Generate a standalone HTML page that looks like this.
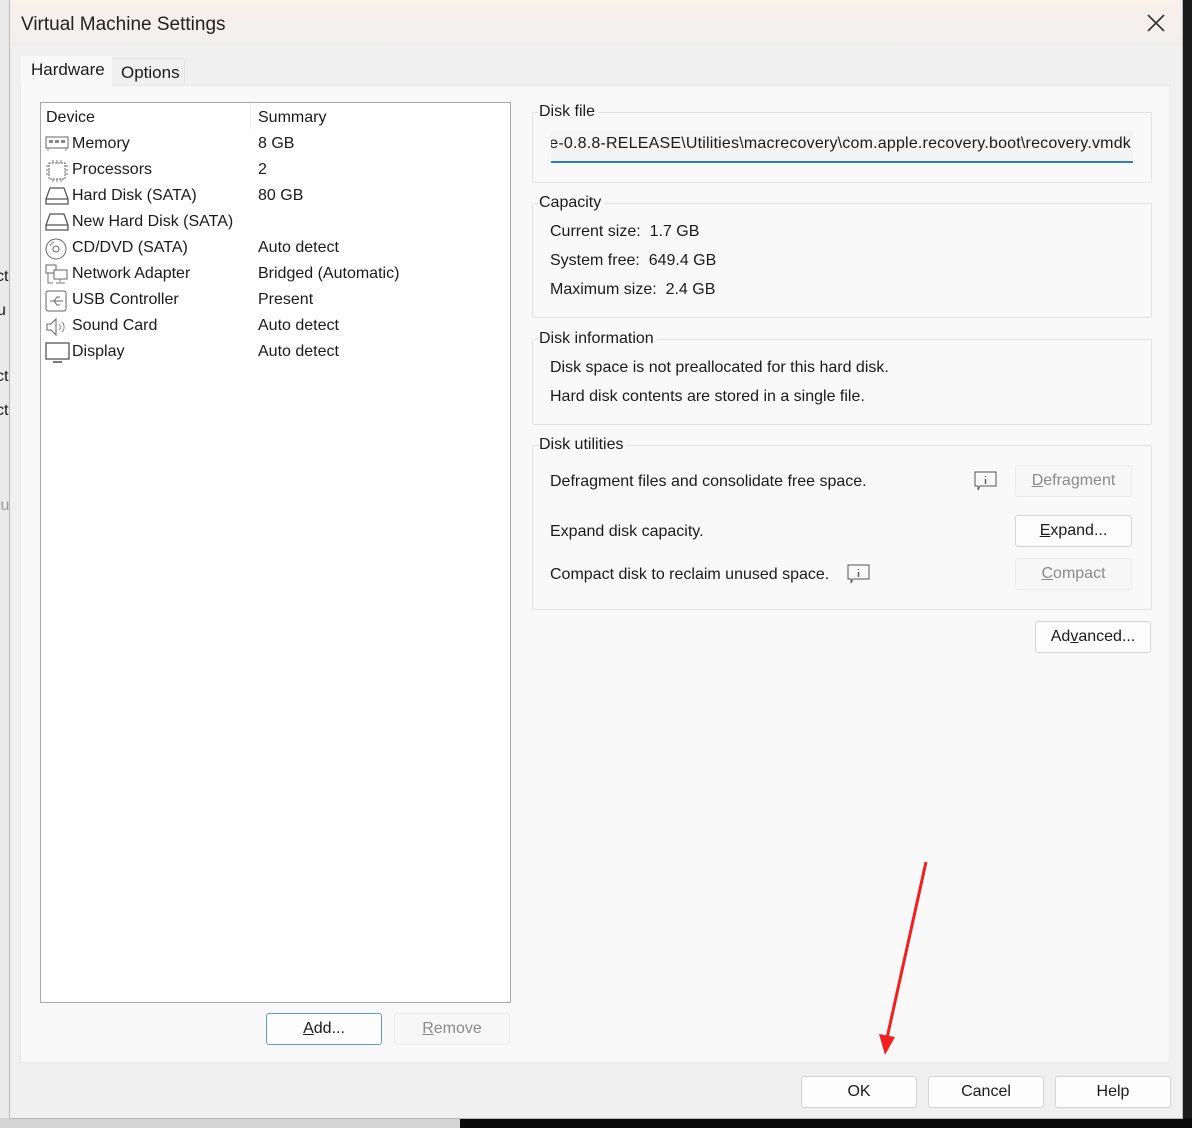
<!DOCTYPE html>
<html><head><meta charset="utf-8"><style>
*{margin:0;padding:0;box-sizing:border-box}
body{width:1192px;height:1128px;position:relative;overflow:hidden;background:#f0f0f0;font-family:"Liberation Sans",sans-serif;font-size:16px;color:#1a1a1a}
.a{position:absolute}
.dlg{left:10px;top:0;width:1172px;height:1118px;background:#f0f0f0;box-shadow:0 0 0 1px #b8b8b8}
.title{left:0;top:0;width:1172px;height:46px;background:linear-gradient(#f8f1ec,#f1efee)}
.grp{position:absolute;border:1px solid #e2e2e2;border-radius:2px}
.gl{position:absolute;background:#f9f9f9;padding-right:3px;left:6px;top:-10px;font-size:16px}
.btn{position:absolute;background:#fdfdfd;border:1px solid #d4d4d4;border-radius:3px;text-align:center;font-size:16px;line-height:28px}
.dis{background:#f7f7f7;border-color:#ececec;color:#8a8a8a}
.row{position:absolute;left:0;height:26px;line-height:26px;width:460px}
.row svg{position:absolute;left:4px;top:3px}
.row .n{position:absolute;left:31px}
.row .s{position:absolute;left:217px}
</style></head><body>
<div class="a" style="left:0;top:0;width:10px;height:1128px;background:#eaeaea"></div>
<div class="a" style="left:-4px;top:268px">ct</div>
<div class="a" style="left:-3px;top:302px">u</div>
<div class="a" style="left:-4px;top:368px">ct</div>
<div class="a" style="left:-4px;top:402px">ct</div>
<div class="a" style="left:-4px;top:497px;color:#999">tu</div>
<div class="a" style="left:1182px;top:0;width:10px;height:1128px;background:#1c1c1c"></div>
<div class="a" style="left:460px;top:1118px;width:732px;height:10px;background:#0a0a0a"></div>
<div class="a" style="left:0;top:1118px;width:460px;height:10px;background:#d4d4d4"></div>

<div class="a dlg">
 <div class="a title"></div>
 <div class="a" style="left:11px;top:14px;font-size:19px;color:#222">Virtual Machine Settings</div>
 <svg class="a" style="left:1137px;top:14px" width="18" height="18"><path d="M1 1L17 17M17 1L1 17" stroke="#333" stroke-width="1.6"/></svg>
 <div class="a" style="left:101px;top:58px;width:74px;height:28px;background:#f0f0f0;border:1px solid #e4e4e4;border-bottom:none"></div>
 <div class="a" style="left:111px;top:63px;font-size:17px">Options</div>
 <div class="a" style="left:10px;top:85px;width:1150px;height:978px;background:#f9f9f9;border:1px solid #e8e8e8"></div>
 <div class="a" style="left:11px;top:56px;width:91px;height:32px;background:#f9f9f9"></div>
 <div class="a" style="left:21px;top:60px;font-size:17px">Hardware</div>

 <div class="a" style="left:30px;top:102px;width:471px;height:901px;background:#fff;border:1px solid #a8a8a8">
  <div class="a" style="left:209px;top:0;width:1px;height:26px;background:#eee"></div>
  <div class="row" style="top:2px"><span class="n" style="left:5px">Device</span><span class="s">Summary</span></div>
  <div class="row" style="top:28px"><svg width="26" height="20"><rect x="1" y="3" width="22" height="11" fill="none" stroke="#666"/><rect x="4" y="6" width="4" height="3" fill="#888"/><rect x="10" y="6" width="4" height="3" fill="#888"/><rect x="16" y="6" width="4" height="3" fill="#888"/><path d="M3 14v3M21 14v3" stroke="#888"/></svg><span class="n">Memory</span><span class="s">8 GB</span></div>
  <div class="row" style="top:54px"><svg width="26" height="22"><rect x="4" y="3" width="16" height="16" fill="none" stroke="#666" stroke-dasharray="2 1"/><path d="M1 6h3M1 10h3M1 14h3M20 6h3M20 10h3M20 14h3M8 0v3M12 0v3M16 0v3M8 19v3M12 19v3M16 19v3" stroke="#777"/></svg><span class="n">Processors</span><span class="s">2</span></div>
  <div class="row" style="top:80px"><svg width="26" height="20"><path d="M5 2h14l4 11v5H1v-5z M1 13h22" fill="none" stroke="#555" stroke-width="1.3"/></svg><span class="n">Hard Disk (SATA)</span><span class="s">80 GB</span></div>
  <div class="row" style="top:106px"><svg width="26" height="20"><path d="M5 2h14l4 11v5H1v-5z M1 13h22" fill="none" stroke="#555" stroke-width="1.3"/></svg><span class="n">New Hard Disk (SATA)</span></div>
  <div class="row" style="top:132px"><svg width="26" height="22"><circle cx="11" cy="11" r="10" fill="none" stroke="#666"/><circle cx="11" cy="11" r="3" fill="none" stroke="#666"/><path d="M5 8a7 7 0 0 1 4-4" stroke="#888" fill="none"/></svg><span class="n">CD/DVD (SATA)</span><span class="s">Auto detect</span></div>
  <div class="row" style="top:158px"><svg width="26" height="22"><rect x="1" y="1" width="10" height="8" fill="none" stroke="#666"/><rect x="9" y="6" width="13" height="9" fill="#fff" stroke="#666"/><path d="M15 15v3M11 19h9M3 9v10h5" stroke="#777" fill="none"/></svg><span class="n">Network Adapter</span><span class="s">Bridged (Automatic)</span></div>
  <div class="row" style="top:184px"><svg width="26" height="22"><rect x="1" y="1" width="20" height="20" rx="2" fill="none" stroke="#666"/><path d="M5 11h13M9 11l3-4h3M9 11l3 4h3" stroke="#666" fill="none"/></svg><span class="n">USB Controller</span><span class="s">Present</span></div>
  <div class="row" style="top:210px"><svg width="26" height="22"><path d="M2 8h4l5-5v16l-5-5H2z" fill="none" stroke="#666"/><path d="M14 8a4 4 0 0 1 0 6M17 6a7 7 0 0 1 0 10" fill="none" stroke="#888"/></svg><span class="n">Sound Card</span><span class="s">Auto detect</span></div>
  <div class="row" style="top:236px"><svg width="26" height="22"><rect x="1" y="1" width="23" height="16" fill="none" stroke="#555" stroke-width="1.3"/><path d="M8 20h9" stroke="#777" stroke-width="2"/></svg><span class="n">Display</span><span class="s">Auto detect</span></div>
 </div>
 <div class="btn" style="left:256px;top:1013px;width:116px;height:32px;border-color:#5a9bd5;line-height:30px"><u>A</u>dd...</div>
 <div class="btn dis" style="left:384px;top:1013px;width:116px;height:32px;line-height:30px"><u>R</u>emove</div>

 <div class="grp" style="left:522px;top:112px;width:620px;height:71px"><span class="gl">Disk file</span></div>
 <div class="a" style="left:541px;top:131px;width:582px;height:32px;background:#f4f4f4;border-bottom:2px solid #2a7cc7;overflow:hidden;white-space:nowrap">
  <span class="a" style="right:2px;top:4px;letter-spacing:0.2px">e-0.8.8-RELEASE\Utilities\macrecovery\com.apple.recovery.boot\recovery.vmdk</span></div>
 <div class="grp" style="left:522px;top:203px;width:620px;height:115px"><span class="gl">Capacity</span></div>
 <div class="a" style="left:540px;top:223px">Current size:&nbsp; 1.7 GB</div>
 <div class="a" style="left:540px;top:252px">System free:&nbsp; 649.4 GB</div>
 <div class="a" style="left:540px;top:281px">Maximum size:&nbsp; 2.4 GB</div>
 <div class="grp" style="left:522px;top:339px;width:620px;height:86px"><span class="gl">Disk information</span></div>
 <div class="a" style="left:540px;top:359px">Disk space is not preallocated for this hard disk.</div>
 <div class="a" style="left:540px;top:388px">Hard disk contents are stored in a single file.</div>
 <div class="grp" style="left:522px;top:445px;width:620px;height:165px"><span class="gl">Disk utilities</span></div>
 <div class="a" style="left:540px;top:473px">Defragment files and consolidate free space.</div>
 <svg class="a" style="left:964px;top:471px" width="24" height="20"><path d="M1 1h21v14H6l-2 4v-4H1z" fill="none" stroke="#555"/><path d="M11.5 5v1M11.5 8v5" stroke="#555" stroke-width="1.4"/></svg>
 <div class="btn dis" style="left:1005px;top:465px;width:117px;height:32px;line-height:30px"><u>D</u>efragment</div>
 <div class="a" style="left:540px;top:523px">Expand disk capacity.</div>
 <div class="btn" style="left:1005px;top:515px;width:117px;height:32px;line-height:30px"><u>E</u>xpand...</div>
 <div class="a" style="left:540px;top:566px">Compact disk to reclaim unused space.</div>
 <svg class="a" style="left:837px;top:564px" width="24" height="20"><path d="M1 1h21v14H6l-2 4v-4H1z" fill="none" stroke="#555"/><path d="M11.5 5v1M11.5 8v5" stroke="#555" stroke-width="1.4"/></svg>
 <div class="btn dis" style="left:1005px;top:558px;width:117px;height:32px;line-height:30px"><u>C</u>ompact</div>
 <div class="btn" style="left:1025px;top:621px;width:116px;height:32px;line-height:30px">Ad<u>v</u>anced...</div>

 <div class="btn" style="left:791px;top:1076px;width:116px;height:32px;line-height:30px">OK</div>
 <div class="btn" style="left:918px;top:1076px;width:116px;height:32px;line-height:30px">Cancel</div>
 <div class="btn" style="left:1045px;top:1076px;width:116px;height:32px;line-height:30px">Help</div>
</div>
<svg class="a" style="left:0;top:0" width="1192" height="1128"><path d="M926 862L887 1038" stroke="#f0201e" stroke-width="3"/><path d="M879 1034L885 1055L895 1037z" fill="#f0201e"/></svg>
</body></html>
